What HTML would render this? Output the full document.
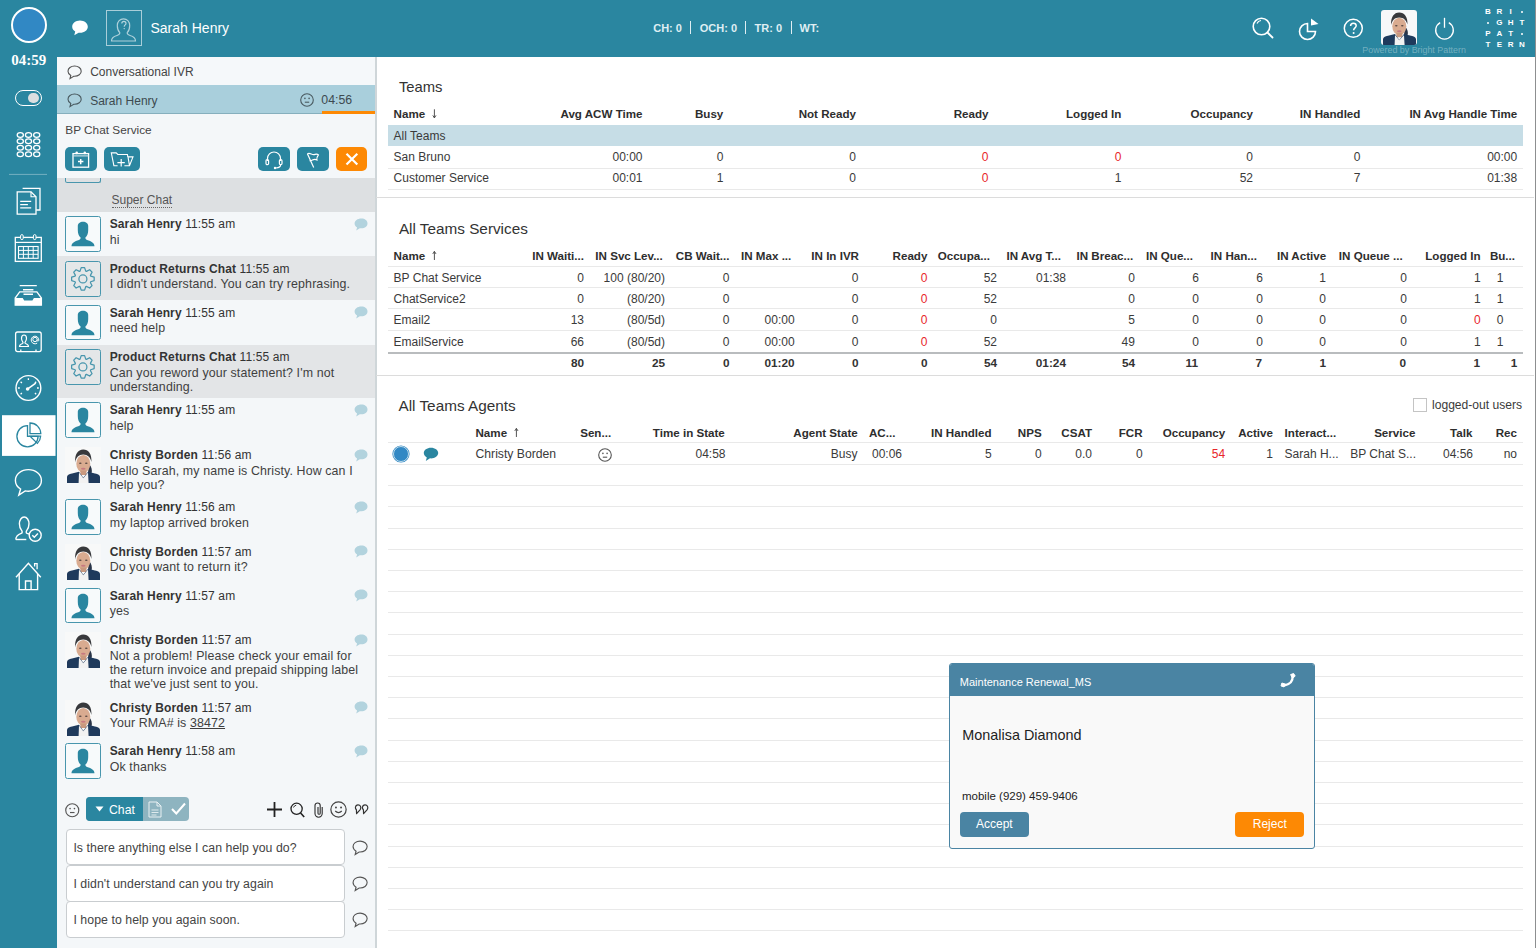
<!DOCTYPE html><html><head><meta charset="utf-8"><title>Agent Desktop</title><style>
*{box-sizing:border-box}
html,body{margin:0;padding:0}
body{width:1536px;height:948px;overflow:hidden;position:relative;background:#fff;font-family:"Liberation Sans",sans-serif;color:#333}
.t{position:absolute;white-space:nowrap}
.b{position:absolute}
svg{position:absolute;overflow:visible}
</style></head><body>
<div class="b" style="left:0px;top:0px;width:1536px;height:57px;background:#2a86a0"></div>
<div class="b" style="left:0px;top:0px;width:57px;height:948px;background:#2a86a0"></div>
<div class="b" style="left:57px;top:57px;width:318px;height:891px;background:#f4f7f9"></div>
<div class="b" style="left:375px;top:57px;width:1.5px;height:891px;background:#cfd6d9"></div>
<div class="b" style="left:11px;top:7px;width:36px;height:36px;border-radius:50%;background:#3188c4;border:2px solid #fff"></div>
<div class="t" style="left:11.30px;top:50.90px;font-size:15px;line-height:18px;font-weight:bold;color:#fff;font-family:'Liberation Serif',serif;letter-spacing:0px">04:59</div>
<div class="b" style="left:15px;top:90px;width:27px;height:16px;border-radius:8px;border:1.7px solid #fff"></div>
<div class="b" style="left:28.2px;top:92.6px;width:10.6px;height:10.6px;border-radius:50%;background:#dcdfe0"></div>
<svg style="left:71px;top:19px" width="18" height="18" viewBox="0 0 18 18"><path d="M9 1.5C4.6 1.5 1.2 4.3 1.2 7.7c0 2 1.2 3.7 3 4.8L3.3 16.3l4.3-2.6c.5.1 .9.1 1.4.1 4.4 0 7.8-2.8 7.8-6.1S13.4 1.5 9 1.5z" fill="#fff"/></svg>
<div class="b" style="left:106px;top:10px;width:36px;height:36px;border:1.5px solid rgba(255,255,255,0.6)"></div>
<svg style="left:106px;top:10px" width="36" height="36" viewBox="0 0 36 36"><path d="M5.5 31c0-3 2-4.5 5.5-5.5 2-.6 3-1.3 2.8-2.8-1.8-1.8-2.5-4.2-2.5-7.2 0-4 2.8-6.7 6.2-6.7s6.2 2.7 6.2 6.7c0 3-.7 5.4-2.5 7.2-.2 1.5.8 2.2 2.8 2.8 3.5 1 5.5 2.5 5.5 5.5z" fill="none" stroke="rgba(255,255,255,0.62)" stroke-width="1.2"/><path d="M15.8 13.6c0-1.4.9-2.3 2.1-2.3s2.1.9 2.1 2.1c0 1.5-1.8 1.6-1.8 3.3" fill="none" stroke="rgba(255,255,255,0.65)" stroke-width="1.15"/><circle cx="18.2" cy="18.6" r="0.7" fill="rgba(255,255,255,0.7)"/></svg>
<div class="t" style="left:150.50px;top:18.95px;font-size:14px;line-height:18px;font-weight:normal;color:#fff;">Sarah Henry</div>
<div class="t" style="left:653.20px;top:20.99px;font-size:11px;line-height:14px;font-weight:bold;color:#dfeef3;">CH: 0</div>
<div class="t" style="left:699.80px;top:20.99px;font-size:11px;line-height:14px;font-weight:bold;color:#dfeef3;">OCH: 0</div>
<div class="t" style="left:754.50px;top:20.99px;font-size:11px;line-height:14px;font-weight:bold;color:#dfeef3;">TR: 0</div>
<div class="t" style="left:799.60px;top:20.99px;font-size:11px;line-height:14px;font-weight:bold;color:#dfeef3;">WT:</div>
<div class="b" style="left:690.2px;top:21px;width:1px;height:13px;background:#dfeef3"></div>
<div class="b" style="left:745.4px;top:21px;width:1px;height:13px;background:#dfeef3"></div>
<div class="b" style="left:790.5px;top:21px;width:1px;height:13px;background:#dfeef3"></div>
<svg style="left:1252px;top:17px" width="22" height="22" viewBox="0 0 22 22"><circle cx="9.5" cy="9.5" r="8.3" fill="none" stroke="#fff" stroke-width="1.6"/><path d="M15.5 15.5l5 5" stroke="#fff" stroke-width="1.8" stroke-linecap="round"/><path d="M5 6.5a5 5 0 0 1 4-3" fill="none" stroke="#fff" stroke-width="1.2"/></svg>
<svg style="left:1297px;top:17px" width="24" height="23" viewBox="0 0 24 23"><path d="M10.5 6.5a8 8 0 1 0 8 8h-8z" fill="none" stroke="#fff" stroke-width="1.6"/><path d="M14 1.5l7.5 5.5-7.5 1.5z" fill="#fff"/></svg>
<svg style="left:1343px;top:18px" width="21" height="21" viewBox="0 0 21 21"><circle cx="10.3" cy="10.3" r="9" fill="none" stroke="#fff" stroke-width="1.5"/><path d="M7.6 8c0-1.7 1.2-2.8 2.8-2.8s2.8 1.1 2.8 2.6c0 2-2.6 2.2-2.6 4.4" fill="none" stroke="#fff" stroke-width="1.5"/><circle cx="10.6" cy="15" r="1" fill="#fff"/></svg>
<svg style="left:1434px;top:17px" width="21" height="23" viewBox="0 0 21 23"><path d="M6.2 5.6a8.8 8.8 0 1 0 8.6 0" fill="none" stroke="#fff" stroke-width="1.3"/><path d="M10.5 .8v10" stroke="#fff" stroke-width="1.3"/></svg>
<div class="b" style="left:1381px;top:10px;width:36px;height:35px;border-radius:3px;overflow:hidden"><svg style="left:0px;top:0px" width="36" height="35" viewBox="0 0 36 36" preserveAspectRatio="none"><rect width="36" height="36" fill="#f7f8f9"/><path d="M24 17c2.5 2.5 3.5 6 2.5 9.5l-3.5-1z" fill="#2a3548"/><ellipse cx="18.3" cy="16.8" rx="7" ry="8.8" fill="#d9ab90"/><path d="M10.2 15.5C9.5 7.5 13 2.6 18.2 2.6s8.8 4.6 8.2 12.4c-1-4.6-3.8-7.4-8.2-7.4s-7.2 2.8-8 7.9z" fill="#38393c"/><ellipse cx="15.3" cy="16.2" rx="1.3" ry="0.7" fill="#5b4a44"/><ellipse cx="21.3" cy="16.2" rx="1.3" ry="0.7" fill="#5b4a44"/><ellipse cx="18.3" cy="21.8" rx="2.3" ry="1" fill="#c77a80"/><rect x="15.4" y="23.5" width="6" height="4.5" fill="#c9997f"/><path d="M2 36v-6c0-2 2-3 5-3.6l7-1.6 4.3 6 4.7-6 7 1.6c3 .6 5 1.6 5 3.6v6z" fill="#1f3a5c"/><path d="M14 25.6l4.3 5.6 4.7-5.6.6 10.4h-10z" fill="#f2f2f2"/></svg></div>
<div class="t" style="left:1362.30px;top:45.22px;font-size:8.9px;line-height:10px;font-weight:normal;color:rgba(255,255,255,0.35);">Powered by Bright Pattern</div>
<div class="t" style="left:1482.0px;top:6.0px;width:12px;text-align:center;font-size:8px;line-height:12px;font-weight:bold;color:#fff">B</div>
<div class="t" style="left:1493.3px;top:6.0px;width:12px;text-align:center;font-size:8px;line-height:12px;font-weight:bold;color:#fff">R</div>
<div class="t" style="left:1504.6px;top:6.0px;width:12px;text-align:center;font-size:8px;line-height:12px;font-weight:bold;color:#fff">I</div>
<div class="b" style="left:1520.8px;top:10.9px;width:2.2px;height:2.2px;background:#fff;border-radius:50%"></div>
<div class="b" style="left:1486.9px;top:22.0px;width:2.2px;height:2.2px;background:#fff;border-radius:50%"></div>
<div class="t" style="left:1493.3px;top:17.1px;width:12px;text-align:center;font-size:8px;line-height:12px;font-weight:bold;color:#fff">G</div>
<div class="t" style="left:1504.6px;top:17.1px;width:12px;text-align:center;font-size:8px;line-height:12px;font-weight:bold;color:#fff">H</div>
<div class="t" style="left:1515.9px;top:17.1px;width:12px;text-align:center;font-size:8px;line-height:12px;font-weight:bold;color:#fff">T</div>
<div class="t" style="left:1482.0px;top:28.2px;width:12px;text-align:center;font-size:8px;line-height:12px;font-weight:bold;color:#fff">P</div>
<div class="t" style="left:1493.3px;top:28.2px;width:12px;text-align:center;font-size:8px;line-height:12px;font-weight:bold;color:#fff">A</div>
<div class="t" style="left:1504.6px;top:28.2px;width:12px;text-align:center;font-size:8px;line-height:12px;font-weight:bold;color:#fff">T</div>
<div class="b" style="left:1520.8px;top:33.1px;width:2.2px;height:2.2px;background:#fff;border-radius:50%"></div>
<div class="t" style="left:1482.0px;top:39.3px;width:12px;text-align:center;font-size:8px;line-height:12px;font-weight:bold;color:#fff">T</div>
<div class="t" style="left:1493.3px;top:39.3px;width:12px;text-align:center;font-size:8px;line-height:12px;font-weight:bold;color:#fff">E</div>
<div class="t" style="left:1504.6px;top:39.3px;width:12px;text-align:center;font-size:8px;line-height:12px;font-weight:bold;color:#fff">R</div>
<div class="t" style="left:1515.9px;top:39.3px;width:12px;text-align:center;font-size:8px;line-height:12px;font-weight:bold;color:#fff">N</div>
<svg style="left:0;top:0" width="57" height="948"><ellipse cx="20.3" cy="135" rx="3.1" ry="2.4" fill="none" stroke="#fff" stroke-width="1.3"/><ellipse cx="20.3" cy="141.3" rx="3.1" ry="2.4" fill="none" stroke="#fff" stroke-width="1.3"/><ellipse cx="20.3" cy="147.7" rx="3.1" ry="2.4" fill="none" stroke="#fff" stroke-width="1.3"/><ellipse cx="20.3" cy="154.2" rx="3.1" ry="2.4" fill="none" stroke="#fff" stroke-width="1.3"/><ellipse cx="28.5" cy="135" rx="3.1" ry="2.4" fill="none" stroke="#fff" stroke-width="1.3"/><ellipse cx="28.5" cy="141.3" rx="3.1" ry="2.4" fill="none" stroke="#fff" stroke-width="1.3"/><ellipse cx="28.5" cy="147.7" rx="3.1" ry="2.4" fill="none" stroke="#fff" stroke-width="1.3"/><ellipse cx="28.5" cy="154.2" rx="3.1" ry="2.4" fill="none" stroke="#fff" stroke-width="1.3"/><ellipse cx="36.7" cy="135" rx="3.1" ry="2.4" fill="none" stroke="#fff" stroke-width="1.3"/><ellipse cx="36.7" cy="141.3" rx="3.1" ry="2.4" fill="none" stroke="#fff" stroke-width="1.3"/><ellipse cx="36.7" cy="147.7" rx="3.1" ry="2.4" fill="none" stroke="#fff" stroke-width="1.3"/><ellipse cx="36.7" cy="154.2" rx="3.1" ry="2.4" fill="none" stroke="#fff" stroke-width="1.3"/><path d="M9 174.4h38" stroke="rgba(255,255,255,0.35)" stroke-width="1"/><path d="M22.6 188.4h17.4v21.6h-3.8" fill="none" stroke="#fff" stroke-width="1.3"/><path d="M17.2 191.8h13.8l5 5v17.3h-18.8z" fill="#2a86a0" stroke="#fff" stroke-width="1.3"/><path d="M31 191.8v5h5" fill="none" stroke="#fff" stroke-width="1.1"/><path d="M20.2 201.3h11M20.2 204.7h7.7M20.2 207.8h11" stroke="#fff" stroke-width="1.2"/><rect x="15.3" y="237.4" width="26" height="24" fill="none" stroke="#fff" stroke-width="1.3"/><path d="M15.3 242.4h26" stroke="#fff" stroke-width="1.2"/><rect x="20.6" y="234.6" width="2.6" height="5" rx="1.3" fill="#2a86a0" stroke="#fff" stroke-width="1"/><rect x="33.4" y="234.6" width="2.6" height="5" rx="1.3" fill="#2a86a0" stroke="#fff" stroke-width="1"/><rect x="18.5" y="246.5" width="19.6" height="11.8" fill="none" stroke="#fff" stroke-width="1.1"/><path d="M23.4 246.5v11.8M28.3 246.5v11.8M33.2 246.5v11.8M18.5 250.4h19.6M18.5 254.3h19.6" stroke="#fff" stroke-width="1"/><path d="M19.7 285.6h17.1M23 289.7h10.4M23.5 294.3h9.5" stroke="#fff" stroke-width="1.4"/><path d="M15.2 298v7.2h26.2V298l-4.5-6.2h-17.2z" fill="none" stroke="#fff" stroke-width="1.3"/><path d="M15.2 298h7.5l1.5 2.5h8.2l1.5-2.5h7.5v7.2H15.2z" fill="#fff"/><rect x="15.6" y="332" width="25.6" height="19.6" rx="2" fill="none" stroke="#fff" stroke-width="1.3"/><path d="M20.8 351.6v-2"  stroke="#fff" stroke-width="1.3"/><path d="M36 351.6v-2" stroke="#fff" stroke-width="1.3"/><path d="M19.5 346.5c0-1.8 1.5-2.5 3-3 .7-.3.6-1 .2-1.6-.8-1-1.2-2.2-1.2-3.6 0-2 1.1-3.3 2.5-3.3s2.5 1.3 2.5 3.3c0 1.4-.4 2.6-1.2 3.6-.4.6-.5 1.3.2 1.6 1.5.5 3 1.2 3 3z" fill="none" stroke="#fff" stroke-width="1.2"/><circle cx="35" cy="339.5" r="2.2" fill="none" stroke="#fff" stroke-width="1"/><path d="M37.2 339.5v1c0 1 1.6 1 1.6-.5a3.8 3.8 0 1 0-1.6 3.1" fill="none" stroke="#fff" stroke-width="1"/><circle cx="28.4" cy="388" r="12.4" fill="none" stroke="#fff" stroke-width="1.4"/><path d="M28.4 378.2v1.8M20.6 381.8l1.3 1.2M18 388h1.8M20.6 394.2l1.3-1.2M36.2 394.2l-1.3-1.2M38.8 388H37M36.2 381.8l-1.3 1.2" stroke="#fff" stroke-width="1.3"/><path d="M27 389.4l8.8-6.2" stroke="#fff" stroke-width="1.6"/><circle cx="27.6" cy="389" r="1.8" fill="#fff"/><rect x="2" y="415.2" width="53.5" height="40.7" fill="#fff"/><path d="M27.5 425.7a10.6 10.6 0 1 0 10.6 10.6H27.5z" fill="none" stroke="#2a86a0" stroke-width="1.3"/><path d="M30 423v10.6h10.8A10.8 10.8 0 0 0 30 423z" fill="none" stroke="#2a86a0" stroke-width="1.3"/><path d="M30 436.2h10.6a10.8 10.8 0 0 1-3.2 7.2z" fill="none" stroke="#2a86a0" stroke-width="1.3"/><path d="M28.4 469.6c-7.2 0-13 4.8-13 10.8 0 3.5 2 6.6 5.2 8.6l-1.8 6.2 6.4-4.3c1 .2 2.1.3 3.2.3 7.2 0 13-4.8 13-10.8s-5.8-10.8-13-10.8z" fill="none" stroke="#fff" stroke-width="1.4"/><path d="M15.8 539.5c0-3.8 2.6-5 5.4-6.1 1.3-.5 1.2-1.9.4-3-1.4-1.8-2.2-4.1-2.2-6.6 0-3.8 2.1-6.8 4.8-6.8s4.8 3 4.8 6.8c0 2.5-.8 4.8-2.2 6.6-.8 1.1-.9 2.5.4 3 .6.2 1.2.5 1.8.8" fill="none" stroke="#fff" stroke-width="1.4"/><path d="M15.8 539.5h10.5" stroke="#fff" stroke-width="1.4"/><circle cx="35.2" cy="535.3" r="6" fill="#2a86a0" stroke="#fff" stroke-width="1.4"/><path d="M32.3 535.3l2 2 3.6-3.8" fill="none" stroke="#fff" stroke-width="1.4"/><path d="M16 577.2l12.4-14 12.4 14" fill="none" stroke="#fff" stroke-width="1.4"/><path d="M19.2 574v15.6h18.4V574" fill="none" stroke="#fff" stroke-width="1.4"/><path d="M25.5 589.6v-8.6h5.6v8.6" fill="none" stroke="#fff" stroke-width="1.4"/><path d="M34.6 566.5v-2.8h2.5v5.6" fill="none" stroke="#fff" stroke-width="1.3"/></svg>
<div class="b" style="left:57px;top:57px;width:318px;height:28px;background:#f5f8fa"></div>
<svg style="left:66.5px;top:64.8px" width="15" height="15" viewBox="0 0 15 15"><path d="M7.6 1C3.9 1 1 3.3 1 6.2c0 1.8 1.1 3.3 2.8 4.3L3 13.6l3.7-2.4c.3 0 .6.1.9.1 3.7 0 6.6-2.3 6.6-5.1S11.3 1 7.6 1z" fill="none" stroke="#555" stroke-width="1.1"/></svg>
<div class="t" style="left:90.20px;top:64.34px;font-size:12px;line-height:16px;font-weight:normal;color:#444;">Conversational IVR</div>
<div class="b" style="left:57px;top:85px;width:318px;height:29.2px;background:#a9cfdc;border-bottom:1px solid #86afbd"></div>
<svg style="left:66.5px;top:92.8px" width="15" height="15" viewBox="0 0 15 15"><path d="M7.6 1C3.9 1 1 3.3 1 6.2c0 1.8 1.1 3.3 2.8 4.3L3 13.6l3.7-2.4c.3 0 .6.1.9.1 3.7 0 6.6-2.3 6.6-5.1S11.3 1 7.6 1z" fill="none" stroke="#4a5a60" stroke-width="1.1"/></svg>
<div class="t" style="left:90.20px;top:92.54px;font-size:12px;line-height:16px;font-weight:normal;color:#3d4a50;">Sarah Henry</div>
<svg style="left:300px;top:93.3px" width="14" height="14" viewBox="0 0 14 14"><circle cx="7" cy="7" r="6.3" fill="none" stroke="#4a5a60" stroke-width="1.1"/><circle cx="4.9" cy="5.4" r="0.8" fill="#4a5a60"/><circle cx="9.1" cy="5.4" r="0.8" fill="#4a5a60"/><path d="M4.8 9.2h4.4" stroke="#4a5a60" stroke-width="1.1"/></svg>
<div class="t" style="left:321.30px;top:91.54px;font-size:12.3px;line-height:16px;font-weight:normal;color:#3d4a50;">04:56</div>
<div class="b" style="left:321.7px;top:110.8px;width:53px;height:3.2px;background:#fd8904"></div>
<div class="t" style="left:65.30px;top:121.51px;font-size:11.8px;line-height:16px;font-weight:normal;color:#444;">BP Chat Service</div>
<div class="b" style="left:65.3px;top:146.5px;width:32px;height:24.8px;background:#2a86a0;border-radius:5px"></div><svg style="left:65.3px;top:146.5px" width="32" height="24.8" viewBox="0 0 32 24.8"><rect x="8" y="6.6" width="15.6" height="13.6" fill="none" stroke="#fff" stroke-width="1.3"/><path d="M8 8.9h15.6" stroke="#cfe3ea" stroke-width="1.1"/><circle cx="11.7" cy="5.9" r="1.3" fill="#fff"/><circle cx="19.8" cy="5.9" r="1.3" fill="#fff"/><path d="M15.7 11.9v5.4M13 14.6h5.4" stroke="#fff" stroke-width="1.5"/></svg>
<div class="b" style="left:104.3px;top:146.5px;width:35.4px;height:24.8px;background:#2a86a0;border-radius:5px"></div><svg style="left:104.3px;top:146.5px" width="35.4" height="24.8" viewBox="0 0 35.4 24.8"><path d="M13.6 18.7H9.9L7.3 5.9h4.9l1.6 1.6h9.6l.5 2.4" fill="none" stroke="#fff" stroke-width="1.1"/><path d="M20.4 18.7h5.1L29 9.9h-5L25.5 18.7" fill="none" stroke="#fff" stroke-width="1.1"/><path d="M17.2 12v7.4M13.4 15.7h7.4" stroke="#fff" stroke-width="1.2"/></svg>
<div class="b" style="left:258px;top:146.5px;width:32px;height:24.8px;background:#2a86a0;border-radius:5px"></div><svg style="left:258px;top:146.5px" width="32" height="24.8" viewBox="0 0 32 24.8"><path d="M9.5 14v-2.5a6.5 6.5 0 0 1 13 0V14" fill="none" stroke="#fff" stroke-width="1.2"/><rect x="8" y="12.6" width="2.6" height="5" rx="1.2" fill="none" stroke="#fff" stroke-width="1.2"/><rect x="21.4" y="12.6" width="2.6" height="5" rx="1.2" fill="none" stroke="#fff" stroke-width="1.2"/><path d="M22.7 17.6c0 2.2-2 3.4-4.8 3.4" fill="none" stroke="#fff" stroke-width="1.2"/><circle cx="17" cy="21" r="1.2" fill="#fff"/></svg>
<div class="b" style="left:296.9px;top:146.5px;width:32px;height:24.8px;background:#2a86a0;border-radius:5px"></div><svg style="left:296.9px;top:146.5px" width="32" height="24.8" viewBox="0 0 32 24.8"><path d="M10.4 6.8l6.3 13.6" fill="none" stroke="#fff" stroke-width="1.2"/><path d="M10.4 6.8c3-1.5 4.5 1.8 7.5.6 1.5-.6 2.8-.3 3.5.5-1.2 1.6-1.8 3.3-1.5 5-1.5-.8-3-.7-4.5.2-1 .6-2 .8-2.8.5" fill="none" stroke="#fff" stroke-width="1.2"/></svg>
<div class="b" style="left:335.7px;top:146.5px;width:31.8px;height:24.8px;background:#fd8904;border-radius:5px"></div><svg style="left:335.7px;top:146.5px" width="31.8" height="24.8" viewBox="0 0 31.8 24.8"><path d="M10.5 6.7l10.8 10.8M21.3 6.7L10.5 17.5" stroke="#fff" stroke-width="2.2"/></svg>
<div class="b" style="left:57px;top:177.8px;width:318px;height:34px;background:#dde0e2"></div>
<div class="b" style="left:65.3px;top:177.8px;width:35.6px;height:5.6px;border:1.7px solid #4896ad;border-top:none;border-radius:0 0 2.5px 2.5px"></div>
<div class="t" style="left:111.50px;top:192.84px;font-size:12px;line-height:14px;font-weight:normal;color:#555;border-bottom:1px dotted #666;line-height:14px">Super Chat</div>
<div class="b" style="left:65.3px;top:216.2px;width:35.6px;height:35.8px;border:1.7px solid #4896ad;border-radius:2.5px;background:#f7fafb"></div><svg style="left:65.3px;top:216.2px" width="36" height="36" viewBox="0 0 36 36"><path d="M6.5 30.3C6.5 27 9.5 25.3 14 24c1.2-.4 1.6-1 1.6-2.4-1.8-1.6-2.8-4.1-2.8-7.6V10c0-2.7 2.2-4.3 5.2-4.3s5.2 1.6 5.2 4.3v4c0 3.5-1 6-2.8 7.6 0 1.4.4 2 1.6 2.4 4.5 1.3 7.5 3 7.5 6.3z" fill="#2a86a0"/></svg>
<svg style="left:354.3px;top:217.79999999999998px" width="14" height="13" viewBox="0 0 14 13"><path d="M7.3 .6C3.6.6.6 2.8.6 5.5c0 1.6.9 3 2.5 3.9L2.2 12.6l3.6-2.4c.5.1 1 .1 1.5.1 3.7 0 6.2-2.2 6.2-4.9S11 .6 7.3.6z" fill="#b2d3de"/></svg>
<div class="t" style="left:109.70px;top:216.24px;font-size:12px;line-height:16px;font-weight:normal;color:#333;letter-spacing:0.12px"><b>Sarah Henry</b> 11:55 am</div>
<div class="t" style="left:109.70px;top:231.70px;font-size:12.4px;line-height:16px;font-weight:normal;color:#3f3f3f;letter-spacing:0.12px">hi</div>
<div class="b" style="left:57px;top:256.3px;width:318px;height:44px;background:#e3e5e7"></div>
<div class="b" style="left:65.3px;top:260.8px;width:35.6px;height:35.8px;border:1.7px solid #4896ad;border-radius:2.5px;background:#e4e7e8"></div><svg style="left:65.3px;top:260.8px" width="36" height="36" viewBox="0 0 36 36"><path d="M15.06 10.10 L16.21 6.63 L19.59 6.63 L20.74 10.10 L21.41 10.38 L24.68 8.74 L27.06 11.12 L25.42 14.39 L25.70 15.06 L29.17 16.21 L29.17 19.59 L25.70 20.74 L25.42 21.41 L27.06 24.68 L24.68 27.06 L21.41 25.42 L20.74 25.70 L19.59 29.17 L16.21 29.17 L15.06 25.70 L14.39 25.42 L11.12 27.06 L8.74 24.68 L10.38 21.41 L10.10 20.74 L6.63 19.59 L6.63 16.21 L10.10 15.06 L10.38 14.39 L8.74 11.12 L11.12 8.74 L14.39 10.38Z" fill="none" stroke="#4896ad" stroke-width="1.25" stroke-linejoin="round"/><circle cx="17.9" cy="17.9" r="4" fill="none" stroke="#4896ad" stroke-width="1.25"/></svg>
<div class="t" style="left:109.70px;top:260.84px;font-size:12px;line-height:16px;font-weight:normal;color:#333;letter-spacing:0.12px"><b>Product Returns Chat</b> 11:55 am</div>
<div class="t" style="left:109.70px;top:276.30px;font-size:12.4px;line-height:16px;font-weight:normal;color:#3f3f3f;letter-spacing:0.12px">I didn't understand. You can try rephrasing.</div>
<div class="b" style="left:65.3px;top:304.6px;width:35.6px;height:35.8px;border:1.7px solid #4896ad;border-radius:2.5px;background:#f7fafb"></div><svg style="left:65.3px;top:304.6px" width="36" height="36" viewBox="0 0 36 36"><path d="M6.5 30.3C6.5 27 9.5 25.3 14 24c1.2-.4 1.6-1 1.6-2.4-1.8-1.6-2.8-4.1-2.8-7.6V10c0-2.7 2.2-4.3 5.2-4.3s5.2 1.6 5.2 4.3v4c0 3.5-1 6-2.8 7.6 0 1.4.4 2 1.6 2.4 4.5 1.3 7.5 3 7.5 6.3z" fill="#2a86a0"/></svg>
<svg style="left:354.3px;top:306.20000000000005px" width="14" height="13" viewBox="0 0 14 13"><path d="M7.3 .6C3.6.6.6 2.8.6 5.5c0 1.6.9 3 2.5 3.9L2.2 12.6l3.6-2.4c.5.1 1 .1 1.5.1 3.7 0 6.2-2.2 6.2-4.9S11 .6 7.3.6z" fill="#b2d3de"/></svg>
<div class="t" style="left:109.70px;top:304.64px;font-size:12px;line-height:16px;font-weight:normal;color:#333;letter-spacing:0.12px"><b>Sarah Henry</b> 11:55 am</div>
<div class="t" style="left:109.70px;top:320.10px;font-size:12.4px;line-height:16px;font-weight:normal;color:#3f3f3f;letter-spacing:0.12px">need help</div>
<div class="b" style="left:57px;top:344.7px;width:318px;height:53px;background:#e3e5e7"></div>
<div class="b" style="left:65.3px;top:349.2px;width:35.6px;height:35.8px;border:1.7px solid #4896ad;border-radius:2.5px;background:#e4e7e8"></div><svg style="left:65.3px;top:349.2px" width="36" height="36" viewBox="0 0 36 36"><path d="M15.06 10.10 L16.21 6.63 L19.59 6.63 L20.74 10.10 L21.41 10.38 L24.68 8.74 L27.06 11.12 L25.42 14.39 L25.70 15.06 L29.17 16.21 L29.17 19.59 L25.70 20.74 L25.42 21.41 L27.06 24.68 L24.68 27.06 L21.41 25.42 L20.74 25.70 L19.59 29.17 L16.21 29.17 L15.06 25.70 L14.39 25.42 L11.12 27.06 L8.74 24.68 L10.38 21.41 L10.10 20.74 L6.63 19.59 L6.63 16.21 L10.10 15.06 L10.38 14.39 L8.74 11.12 L11.12 8.74 L14.39 10.38Z" fill="none" stroke="#4896ad" stroke-width="1.25" stroke-linejoin="round"/><circle cx="17.9" cy="17.9" r="4" fill="none" stroke="#4896ad" stroke-width="1.25"/></svg>
<div class="t" style="left:109.70px;top:349.24px;font-size:12px;line-height:16px;font-weight:normal;color:#333;letter-spacing:0.12px"><b>Product Returns Chat</b> 11:55 am</div>
<div class="t" style="left:109.70px;top:364.70px;font-size:12.4px;line-height:16px;font-weight:normal;color:#3f3f3f;letter-spacing:0.12px">Can you reword your statement? I'm not</div>
<div class="t" style="left:109.70px;top:378.90px;font-size:12.4px;line-height:16px;font-weight:normal;color:#3f3f3f;letter-spacing:0.12px">understanding.</div>
<div class="b" style="left:65.3px;top:402px;width:35.6px;height:35.8px;border:1.7px solid #4896ad;border-radius:2.5px;background:#f7fafb"></div><svg style="left:65.3px;top:402px" width="36" height="36" viewBox="0 0 36 36"><path d="M6.5 30.3C6.5 27 9.5 25.3 14 24c1.2-.4 1.6-1 1.6-2.4-1.8-1.6-2.8-4.1-2.8-7.6V10c0-2.7 2.2-4.3 5.2-4.3s5.2 1.6 5.2 4.3v4c0 3.5-1 6-2.8 7.6 0 1.4.4 2 1.6 2.4 4.5 1.3 7.5 3 7.5 6.3z" fill="#2a86a0"/></svg>
<svg style="left:354.3px;top:403.6px" width="14" height="13" viewBox="0 0 14 13"><path d="M7.3 .6C3.6.6.6 2.8.6 5.5c0 1.6.9 3 2.5 3.9L2.2 12.6l3.6-2.4c.5.1 1 .1 1.5.1 3.7 0 6.2-2.2 6.2-4.9S11 .6 7.3.6z" fill="#b2d3de"/></svg>
<div class="t" style="left:109.70px;top:402.04px;font-size:12px;line-height:16px;font-weight:normal;color:#333;letter-spacing:0.12px"><b>Sarah Henry</b> 11:55 am</div>
<div class="t" style="left:109.70px;top:417.50px;font-size:12.4px;line-height:16px;font-weight:normal;color:#3f3f3f;letter-spacing:0.12px">help</div>
<svg style="left:65.3px;top:447px" width="36" height="36" viewBox="0 0 36 36" preserveAspectRatio="none"><rect width="36" height="36" fill="#f8f9f9"/><path d="M24 17c2.5 2.5 3.5 6 2.5 9.5l-3.5-1z" fill="#2a3548"/><ellipse cx="18.3" cy="16.8" rx="7" ry="8.8" fill="#d9ab90"/><path d="M10.2 15.5C9.5 7.5 13 2.6 18.2 2.6s8.8 4.6 8.2 12.4c-1-4.6-3.8-7.4-8.2-7.4s-7.2 2.8-8 7.9z" fill="#38393c"/><ellipse cx="15.3" cy="16.2" rx="1.3" ry="0.7" fill="#5b4a44"/><ellipse cx="21.3" cy="16.2" rx="1.3" ry="0.7" fill="#5b4a44"/><ellipse cx="18.3" cy="21.8" rx="2.3" ry="1" fill="#c77a80"/><rect x="15.4" y="23.5" width="6" height="4.5" fill="#c9997f"/><path d="M2 36v-6c0-2 2-3 5-3.6l7-1.6 4.3 6 4.7-6 7 1.6c3 .6 5 1.6 5 3.6v6z" fill="#1f3a5c"/><path d="M14 25.6l4.3 5.6 4.7-5.6.6 10.4h-10z" fill="#f2f2f2"/></svg>
<svg style="left:354.3px;top:448.6px" width="14" height="13" viewBox="0 0 14 13"><path d="M7.3 .6C3.6.6.6 2.8.6 5.5c0 1.6.9 3 2.5 3.9L2.2 12.6l3.6-2.4c.5.1 1 .1 1.5.1 3.7 0 6.2-2.2 6.2-4.9S11 .6 7.3.6z" fill="#b2d3de"/></svg>
<div class="t" style="left:109.70px;top:447.04px;font-size:12px;line-height:16px;font-weight:normal;color:#333;letter-spacing:0.12px"><b>Christy Borden</b> 11:56 am</div>
<div class="t" style="left:109.70px;top:462.50px;font-size:12.4px;line-height:16px;font-weight:normal;color:#3f3f3f;letter-spacing:0.12px">Hello Sarah, my name is Christy. How can I</div>
<div class="t" style="left:109.70px;top:476.70px;font-size:12.4px;line-height:16px;font-weight:normal;color:#3f3f3f;letter-spacing:0.12px">help you?</div>
<div class="b" style="left:65.3px;top:499.2px;width:35.6px;height:35.8px;border:1.7px solid #4896ad;border-radius:2.5px;background:#f7fafb"></div><svg style="left:65.3px;top:499.2px" width="36" height="36" viewBox="0 0 36 36"><path d="M6.5 30.3C6.5 27 9.5 25.3 14 24c1.2-.4 1.6-1 1.6-2.4-1.8-1.6-2.8-4.1-2.8-7.6V10c0-2.7 2.2-4.3 5.2-4.3s5.2 1.6 5.2 4.3v4c0 3.5-1 6-2.8 7.6 0 1.4.4 2 1.6 2.4 4.5 1.3 7.5 3 7.5 6.3z" fill="#2a86a0"/></svg>
<svg style="left:354.3px;top:500.8px" width="14" height="13" viewBox="0 0 14 13"><path d="M7.3 .6C3.6.6.6 2.8.6 5.5c0 1.6.9 3 2.5 3.9L2.2 12.6l3.6-2.4c.5.1 1 .1 1.5.1 3.7 0 6.2-2.2 6.2-4.9S11 .6 7.3.6z" fill="#b2d3de"/></svg>
<div class="t" style="left:109.70px;top:499.24px;font-size:12px;line-height:16px;font-weight:normal;color:#333;letter-spacing:0.12px"><b>Sarah Henry</b> 11:56 am</div>
<div class="t" style="left:109.70px;top:514.70px;font-size:12.4px;line-height:16px;font-weight:normal;color:#3f3f3f;letter-spacing:0.12px">my laptop arrived broken</div>
<svg style="left:65.3px;top:543.6px" width="36" height="36" viewBox="0 0 36 36" preserveAspectRatio="none"><rect width="36" height="36" fill="#f8f9f9"/><path d="M24 17c2.5 2.5 3.5 6 2.5 9.5l-3.5-1z" fill="#2a3548"/><ellipse cx="18.3" cy="16.8" rx="7" ry="8.8" fill="#d9ab90"/><path d="M10.2 15.5C9.5 7.5 13 2.6 18.2 2.6s8.8 4.6 8.2 12.4c-1-4.6-3.8-7.4-8.2-7.4s-7.2 2.8-8 7.9z" fill="#38393c"/><ellipse cx="15.3" cy="16.2" rx="1.3" ry="0.7" fill="#5b4a44"/><ellipse cx="21.3" cy="16.2" rx="1.3" ry="0.7" fill="#5b4a44"/><ellipse cx="18.3" cy="21.8" rx="2.3" ry="1" fill="#c77a80"/><rect x="15.4" y="23.5" width="6" height="4.5" fill="#c9997f"/><path d="M2 36v-6c0-2 2-3 5-3.6l7-1.6 4.3 6 4.7-6 7 1.6c3 .6 5 1.6 5 3.6v6z" fill="#1f3a5c"/><path d="M14 25.6l4.3 5.6 4.7-5.6.6 10.4h-10z" fill="#f2f2f2"/></svg>
<svg style="left:354.3px;top:545.2px" width="14" height="13" viewBox="0 0 14 13"><path d="M7.3 .6C3.6.6.6 2.8.6 5.5c0 1.6.9 3 2.5 3.9L2.2 12.6l3.6-2.4c.5.1 1 .1 1.5.1 3.7 0 6.2-2.2 6.2-4.9S11 .6 7.3.6z" fill="#b2d3de"/></svg>
<div class="t" style="left:109.70px;top:543.64px;font-size:12px;line-height:16px;font-weight:normal;color:#333;letter-spacing:0.12px"><b>Christy Borden</b> 11:57 am</div>
<div class="t" style="left:109.70px;top:559.10px;font-size:12.4px;line-height:16px;font-weight:normal;color:#3f3f3f;letter-spacing:0.12px">Do you want to return it?</div>
<div class="b" style="left:65.3px;top:587.5px;width:35.6px;height:35.8px;border:1.7px solid #4896ad;border-radius:2.5px;background:#f7fafb"></div><svg style="left:65.3px;top:587.5px" width="36" height="36" viewBox="0 0 36 36"><path d="M6.5 30.3C6.5 27 9.5 25.3 14 24c1.2-.4 1.6-1 1.6-2.4-1.8-1.6-2.8-4.1-2.8-7.6V10c0-2.7 2.2-4.3 5.2-4.3s5.2 1.6 5.2 4.3v4c0 3.5-1 6-2.8 7.6 0 1.4.4 2 1.6 2.4 4.5 1.3 7.5 3 7.5 6.3z" fill="#2a86a0"/></svg>
<svg style="left:354.3px;top:589.1px" width="14" height="13" viewBox="0 0 14 13"><path d="M7.3 .6C3.6.6.6 2.8.6 5.5c0 1.6.9 3 2.5 3.9L2.2 12.6l3.6-2.4c.5.1 1 .1 1.5.1 3.7 0 6.2-2.2 6.2-4.9S11 .6 7.3.6z" fill="#b2d3de"/></svg>
<div class="t" style="left:109.70px;top:587.54px;font-size:12px;line-height:16px;font-weight:normal;color:#333;letter-spacing:0.12px"><b>Sarah Henry</b> 11:57 am</div>
<div class="t" style="left:109.70px;top:603.00px;font-size:12.4px;line-height:16px;font-weight:normal;color:#3f3f3f;letter-spacing:0.12px">yes</div>
<svg style="left:65.3px;top:632.3px" width="36" height="36" viewBox="0 0 36 36" preserveAspectRatio="none"><rect width="36" height="36" fill="#f8f9f9"/><path d="M24 17c2.5 2.5 3.5 6 2.5 9.5l-3.5-1z" fill="#2a3548"/><ellipse cx="18.3" cy="16.8" rx="7" ry="8.8" fill="#d9ab90"/><path d="M10.2 15.5C9.5 7.5 13 2.6 18.2 2.6s8.8 4.6 8.2 12.4c-1-4.6-3.8-7.4-8.2-7.4s-7.2 2.8-8 7.9z" fill="#38393c"/><ellipse cx="15.3" cy="16.2" rx="1.3" ry="0.7" fill="#5b4a44"/><ellipse cx="21.3" cy="16.2" rx="1.3" ry="0.7" fill="#5b4a44"/><ellipse cx="18.3" cy="21.8" rx="2.3" ry="1" fill="#c77a80"/><rect x="15.4" y="23.5" width="6" height="4.5" fill="#c9997f"/><path d="M2 36v-6c0-2 2-3 5-3.6l7-1.6 4.3 6 4.7-6 7 1.6c3 .6 5 1.6 5 3.6v6z" fill="#1f3a5c"/><path d="M14 25.6l4.3 5.6 4.7-5.6.6 10.4h-10z" fill="#f2f2f2"/></svg>
<svg style="left:354.3px;top:633.9px" width="14" height="13" viewBox="0 0 14 13"><path d="M7.3 .6C3.6.6.6 2.8.6 5.5c0 1.6.9 3 2.5 3.9L2.2 12.6l3.6-2.4c.5.1 1 .1 1.5.1 3.7 0 6.2-2.2 6.2-4.9S11 .6 7.3.6z" fill="#b2d3de"/></svg>
<div class="t" style="left:109.70px;top:632.34px;font-size:12px;line-height:16px;font-weight:normal;color:#333;letter-spacing:0.12px"><b>Christy Borden</b> 11:57 am</div>
<div class="t" style="left:109.70px;top:647.80px;font-size:12.4px;line-height:16px;font-weight:normal;color:#3f3f3f;letter-spacing:0.12px">Not a problem! Please check your email for</div>
<div class="t" style="left:109.70px;top:662.00px;font-size:12.4px;line-height:16px;font-weight:normal;color:#3f3f3f;letter-spacing:0.12px">the return invoice and prepaid shipping label</div>
<div class="t" style="left:109.70px;top:676.20px;font-size:12.4px;line-height:16px;font-weight:normal;color:#3f3f3f;letter-spacing:0.12px">that we've just sent to you.</div>
<svg style="left:65.3px;top:699.5px" width="36" height="36" viewBox="0 0 36 36" preserveAspectRatio="none"><rect width="36" height="36" fill="#f8f9f9"/><path d="M24 17c2.5 2.5 3.5 6 2.5 9.5l-3.5-1z" fill="#2a3548"/><ellipse cx="18.3" cy="16.8" rx="7" ry="8.8" fill="#d9ab90"/><path d="M10.2 15.5C9.5 7.5 13 2.6 18.2 2.6s8.8 4.6 8.2 12.4c-1-4.6-3.8-7.4-8.2-7.4s-7.2 2.8-8 7.9z" fill="#38393c"/><ellipse cx="15.3" cy="16.2" rx="1.3" ry="0.7" fill="#5b4a44"/><ellipse cx="21.3" cy="16.2" rx="1.3" ry="0.7" fill="#5b4a44"/><ellipse cx="18.3" cy="21.8" rx="2.3" ry="1" fill="#c77a80"/><rect x="15.4" y="23.5" width="6" height="4.5" fill="#c9997f"/><path d="M2 36v-6c0-2 2-3 5-3.6l7-1.6 4.3 6 4.7-6 7 1.6c3 .6 5 1.6 5 3.6v6z" fill="#1f3a5c"/><path d="M14 25.6l4.3 5.6 4.7-5.6.6 10.4h-10z" fill="#f2f2f2"/></svg>
<svg style="left:354.3px;top:701.1px" width="14" height="13" viewBox="0 0 14 13"><path d="M7.3 .6C3.6.6.6 2.8.6 5.5c0 1.6.9 3 2.5 3.9L2.2 12.6l3.6-2.4c.5.1 1 .1 1.5.1 3.7 0 6.2-2.2 6.2-4.9S11 .6 7.3.6z" fill="#b2d3de"/></svg>
<div class="t" style="left:109.70px;top:699.54px;font-size:12px;line-height:16px;font-weight:normal;color:#333;letter-spacing:0.12px"><b>Christy Borden</b> 11:57 am</div>
<div class="t" style="left:109.70px;top:715.00px;font-size:12.4px;line-height:16px;font-weight:normal;color:#3f3f3f;letter-spacing:0.12px">Your RMA# is <span style="text-decoration:underline">38472</span></div>
<div class="b" style="left:65.3px;top:743px;width:35.6px;height:35.8px;border:1.7px solid #4896ad;border-radius:2.5px;background:#f7fafb"></div><svg style="left:65.3px;top:743px" width="36" height="36" viewBox="0 0 36 36"><path d="M6.5 30.3C6.5 27 9.5 25.3 14 24c1.2-.4 1.6-1 1.6-2.4-1.8-1.6-2.8-4.1-2.8-7.6V10c0-2.7 2.2-4.3 5.2-4.3s5.2 1.6 5.2 4.3v4c0 3.5-1 6-2.8 7.6 0 1.4.4 2 1.6 2.4 4.5 1.3 7.5 3 7.5 6.3z" fill="#2a86a0"/></svg>
<svg style="left:354.3px;top:744.6px" width="14" height="13" viewBox="0 0 14 13"><path d="M7.3 .6C3.6.6.6 2.8.6 5.5c0 1.6.9 3 2.5 3.9L2.2 12.6l3.6-2.4c.5.1 1 .1 1.5.1 3.7 0 6.2-2.2 6.2-4.9S11 .6 7.3.6z" fill="#b2d3de"/></svg>
<div class="t" style="left:109.70px;top:743.04px;font-size:12px;line-height:16px;font-weight:normal;color:#333;letter-spacing:0.12px"><b>Sarah Henry</b> 11:58 am</div>
<div class="t" style="left:109.70px;top:758.50px;font-size:12.4px;line-height:16px;font-weight:normal;color:#3f3f3f;letter-spacing:0.12px">Ok thanks</div>
<svg style="left:64.8px;top:802.8px" width="14.5" height="14.5" viewBox="0 0 14 14"><circle cx="7" cy="7" r="6.3" fill="none" stroke="#555" stroke-width="1.1"/><circle cx="4.9" cy="5.4" r="0.8" fill="#555"/><circle cx="9.1" cy="5.4" r="0.8" fill="#555"/><path d="M4.8 9.2h4.4" stroke="#555" stroke-width="1.1"/></svg>
<div class="b" style="left:85.9px;top:797.2px;width:103px;height:24px;border-radius:4px;background:#8eb4c0;overflow:hidden"><div style="position:absolute;left:0;top:0;width:56.8px;height:24px;background:#2a86a0"></div></div>
<svg style="left:94.5px;top:806px" width="9" height="6" viewBox="0 0 9 6"><path d="M0.5 0.5h8l-4 5z" fill="#fff"/></svg>
<div class="t" style="left:108.90px;top:801.67px;font-size:12.2px;line-height:16px;font-weight:normal;color:#fff;letter-spacing:0.1px">Chat</div>
<svg style="left:147.5px;top:800.5px" width="14" height="17" viewBox="0 0 14 17"><path d="M1 1h8l4 4v11H1z" fill="none" stroke="#e8f0f2" stroke-width="1"/><path d="M9 1v4h4" fill="none" stroke="#e8f0f2" stroke-width="1"/><path d="M3.5 9h7M3.5 11.5h7M3.5 14h5" stroke="#e8f0f2" stroke-width="0.9"/></svg>
<svg style="left:170.5px;top:802px" width="15" height="13" viewBox="0 0 15 13"><path d="M1 7l4.3 4.5L14 1.5" fill="none" stroke="#fff" stroke-width="2"/></svg>
<svg style="left:266px;top:801px" width="17" height="17" viewBox="0 0 17 17"><path d="M8.5 1v15M1 8.5h15" stroke="#222" stroke-width="1.8"/></svg>
<svg style="left:290px;top:801.5px" width="15" height="16" viewBox="0 0 15 16"><circle cx="6.6" cy="6.8" r="5.6" fill="none" stroke="#222" stroke-width="1.3"/><path d="M10.6 11l3.6 4" stroke="#222" stroke-width="1.6"/><path d="M3.5 5.5a3.5 3.5 0 0 1 2.7-2.3" fill="none" stroke="#222" stroke-width="0.9"/></svg>
<svg style="left:313.5px;top:802px" width="10" height="15" viewBox="0 0 10 15"><path d="M8.2 5v6.6a3.6 3.6 0 0 1-7.2 0V3.6a2.6 2.6 0 0 1 5.2 0v7.6a1.1 1.1 0 0 1-2.2 0V5" fill="none" stroke="#333" stroke-width="1.15"/></svg>
<svg style="left:330px;top:800.6px" width="17" height="17" viewBox="0 0 14 14"><circle cx="7" cy="7" r="6.3" fill="none" stroke="#444" stroke-width="1.0"/><circle cx="4.9" cy="5.4" r="0.8" fill="#444"/><circle cx="9.1" cy="5.4" r="0.8" fill="#444"/><path d="M4.3 8.2q2.7 2.6 5.4 0" fill="none" stroke="#444" stroke-width="1.0"/></svg>
<svg style="left:354.5px;top:803px" width="14" height="12" viewBox="0 0 14 12"><path d="M5.8 4.6a2.7 2.7 0 1 0-4.4 2.1L1.6 10.6 5 6.8c.5-.6.8-1.3.8-2.2zM12.8 4.6a2.7 2.7 0 1 0-4.4 2.1L8.6 10.6 12 6.8c.5-.6.8-1.3.8-2.2z" fill="none" stroke="#333" stroke-width="1.2" stroke-linejoin="round"/></svg>
<div class="b" style="left:65.6px;top:829.0px;width:279px;height:36.4px;border:1px solid #c9cdd0;border-radius:4px;background:#fff"></div>
<div class="t" style="left:73.40px;top:839.64px;font-size:12.3px;line-height:16px;font-weight:normal;color:#444;letter-spacing:0.06px">Is there anything else I can help you do?</div>
<svg style="left:352px;top:839.6px" width="16" height="16" viewBox="0 0 15 15"><path d="M7.6 1C3.9 1 1 3.3 1 6.2c0 1.8 1.1 3.3 2.8 4.3L3 13.6l3.7-2.4c.3 0 .6.1.9.1 3.7 0 6.6-2.3 6.6-5.1S11.3 1 7.6 1z" fill="none" stroke="#555" stroke-width="1.05"/></svg>
<div class="b" style="left:65.6px;top:865.2px;width:279px;height:36.4px;border:1px solid #c9cdd0;border-radius:4px;background:#fff"></div>
<div class="t" style="left:73.40px;top:875.84px;font-size:12.3px;line-height:16px;font-weight:normal;color:#444;letter-spacing:0.06px">I didn't understand can you try again</div>
<svg style="left:352px;top:875.8000000000001px" width="16" height="16" viewBox="0 0 15 15"><path d="M7.6 1C3.9 1 1 3.3 1 6.2c0 1.8 1.1 3.3 2.8 4.3L3 13.6l3.7-2.4c.3 0 .6.1.9.1 3.7 0 6.6-2.3 6.6-5.1S11.3 1 7.6 1z" fill="none" stroke="#555" stroke-width="1.05"/></svg>
<div class="b" style="left:65.6px;top:901.4px;width:279px;height:36.4px;border:1px solid #c9cdd0;border-radius:4px;background:#fff"></div>
<div class="t" style="left:73.40px;top:912.04px;font-size:12.3px;line-height:16px;font-weight:normal;color:#444;letter-spacing:0.06px">I hope to help you again soon.</div>
<svg style="left:352px;top:912.0px" width="16" height="16" viewBox="0 0 15 15"><path d="M7.6 1C3.9 1 1 3.3 1 6.2c0 1.8 1.1 3.3 2.8 4.3L3 13.6l3.7-2.4c.3 0 .6.1.9.1 3.7 0 6.6-2.3 6.6-5.1S11.3 1 7.6 1z" fill="none" stroke="#555" stroke-width="1.05"/></svg>
<div class="t" style="left:398.90px;top:78.37px;font-size:14.8px;line-height:18px;font-weight:normal;color:#333;">Teams</div>
<div class="t" style="left:393.60px;top:105.98px;font-size:11.6px;line-height:16px;font-weight:bold;color:#2e2e2e;">Name</div>
<svg style="left:432.3px;top:109.2px" width="5" height="9.4" viewBox="0 0 5 9.4"><path d="M2.4 0.3v8.6M0.8 6.4l1.6 2.5 1.6-2.5" fill="none" stroke="#4a4a4a" stroke-width="0.95"/></svg>
<div class="t" style="right:893.50px;top:105.98px;font-size:11.6px;line-height:16px;font-weight:bold;color:#2e2e2e;">Avg ACW Time</div>
<div class="t" style="right:812.70px;top:105.98px;font-size:11.6px;line-height:16px;font-weight:bold;color:#2e2e2e;">Busy</div>
<div class="t" style="right:680.00px;top:105.98px;font-size:11.6px;line-height:16px;font-weight:bold;color:#2e2e2e;">Not Ready</div>
<div class="t" style="right:547.50px;top:105.98px;font-size:11.6px;line-height:16px;font-weight:bold;color:#2e2e2e;">Ready</div>
<div class="t" style="right:414.60px;top:105.98px;font-size:11.6px;line-height:16px;font-weight:bold;color:#2e2e2e;">Logged In</div>
<div class="t" style="right:283.00px;top:105.98px;font-size:11.6px;line-height:16px;font-weight:bold;color:#2e2e2e;">Occupancy</div>
<div class="t" style="right:175.60px;top:105.98px;font-size:11.6px;line-height:16px;font-weight:bold;color:#2e2e2e;">IN Handled</div>
<div class="t" style="right:18.80px;top:105.98px;font-size:11.6px;line-height:16px;font-weight:bold;color:#2e2e2e;">IN Avg Handle Time</div>
<div class="b" style="left:388px;top:125.1px;width:1134.6px;height:20.9px;background:#c6dde6"></div>
<div class="t" style="left:393.60px;top:127.74px;font-size:12px;line-height:16px;font-weight:normal;color:#3a3a3a;">All Teams</div>
<div class="t" style="left:393.60px;top:149.14px;font-size:12px;line-height:16px;font-weight:normal;color:#3a3a3a;">San Bruno</div>
<div class="t" style="right:893.50px;top:149.14px;font-size:12px;line-height:16px;font-weight:normal;color:#3a3a3a;">00:00</div>
<div class="t" style="right:812.70px;top:149.14px;font-size:12px;line-height:16px;font-weight:normal;color:#3a3a3a;">0</div>
<div class="t" style="right:680.00px;top:149.14px;font-size:12px;line-height:16px;font-weight:normal;color:#3a3a3a;">0</div>
<div class="t" style="right:547.50px;top:149.14px;font-size:12px;line-height:16px;font-weight:normal;color:#e8262b;">0</div>
<div class="t" style="right:414.60px;top:149.14px;font-size:12px;line-height:16px;font-weight:normal;color:#e8262b;">0</div>
<div class="t" style="right:283.00px;top:149.14px;font-size:12px;line-height:16px;font-weight:normal;color:#3a3a3a;">0</div>
<div class="t" style="right:175.60px;top:149.14px;font-size:12px;line-height:16px;font-weight:normal;color:#3a3a3a;">0</div>
<div class="t" style="right:18.80px;top:149.14px;font-size:12px;line-height:16px;font-weight:normal;color:#3a3a3a;">00:00</div>
<div class="t" style="left:393.60px;top:170.24px;font-size:12px;line-height:16px;font-weight:normal;color:#3a3a3a;">Customer Service</div>
<div class="t" style="right:893.50px;top:170.24px;font-size:12px;line-height:16px;font-weight:normal;color:#3a3a3a;">00:01</div>
<div class="t" style="right:812.70px;top:170.24px;font-size:12px;line-height:16px;font-weight:normal;color:#3a3a3a;">1</div>
<div class="t" style="right:680.00px;top:170.24px;font-size:12px;line-height:16px;font-weight:normal;color:#3a3a3a;">0</div>
<div class="t" style="right:547.50px;top:170.24px;font-size:12px;line-height:16px;font-weight:normal;color:#e8262b;">0</div>
<div class="t" style="right:414.60px;top:170.24px;font-size:12px;line-height:16px;font-weight:normal;color:#3a3a3a;">1</div>
<div class="t" style="right:283.00px;top:170.24px;font-size:12px;line-height:16px;font-weight:normal;color:#3a3a3a;">52</div>
<div class="t" style="right:175.60px;top:170.24px;font-size:12px;line-height:16px;font-weight:normal;color:#3a3a3a;">7</div>
<div class="t" style="right:18.80px;top:170.24px;font-size:12px;line-height:16px;font-weight:normal;color:#3a3a3a;">01:38</div>
<div class="b" style="left:388px;top:167.7px;width:1134.6px;height:1px;background:#e9e9e9"></div>
<div class="b" style="left:388px;top:188.5px;width:1134.6px;height:1px;background:#e9e9e9"></div>
<div class="b" style="left:376px;top:197.3px;width:1158px;height:1px;background:#dcdcdc"></div>
<div class="t" style="left:398.90px;top:219.70px;font-size:15.3px;line-height:18px;font-weight:normal;color:#333;">All Teams Services</div>
<div class="t" style="left:393.60px;top:247.68px;font-size:11.6px;line-height:16px;font-weight:bold;color:#2e2e2e;">Name</div>
<svg style="left:432.3px;top:250.9px" width="5" height="9.4" viewBox="0 0 5 9.4"><path d="M2.4 9v-8.6M0.8 2.9l1.6-2.5 1.6 2.5" fill="none" stroke="#4a4a4a" stroke-width="0.95"/></svg>
<div class="t" style="right:952.00px;top:247.68px;font-size:11.6px;line-height:16px;font-weight:bold;color:#2e2e2e;">IN Waiti...</div>
<div class="t" style="right:873.20px;top:247.68px;font-size:11.6px;line-height:16px;font-weight:bold;color:#2e2e2e;">IN Svc Lev...</div>
<div class="t" style="right:806.50px;top:247.68px;font-size:11.6px;line-height:16px;font-weight:bold;color:#2e2e2e;">CB Wait...</div>
<div class="t" style="right:744.70px;top:247.68px;font-size:11.6px;line-height:16px;font-weight:bold;color:#2e2e2e;">IN Max ...</div>
<div class="t" style="right:677.00px;top:247.68px;font-size:11.6px;line-height:16px;font-weight:bold;color:#2e2e2e;">IN In IVR</div>
<div class="t" style="right:608.60px;top:247.68px;font-size:11.6px;line-height:16px;font-weight:bold;color:#2e2e2e;">Ready</div>
<div class="t" style="right:546.10px;top:247.68px;font-size:11.6px;line-height:16px;font-weight:bold;color:#2e2e2e;">Occupa...</div>
<div class="t" style="right:475.00px;top:247.68px;font-size:11.6px;line-height:16px;font-weight:bold;color:#2e2e2e;">IN Avg T...</div>
<div class="t" style="right:402.80px;top:247.68px;font-size:11.6px;line-height:16px;font-weight:bold;color:#2e2e2e;">IN Breac...</div>
<div class="t" style="right:343.00px;top:247.68px;font-size:11.6px;line-height:16px;font-weight:bold;color:#2e2e2e;">IN Que...</div>
<div class="t" style="right:279.00px;top:247.68px;font-size:11.6px;line-height:16px;font-weight:bold;color:#2e2e2e;">IN Han...</div>
<div class="t" style="right:209.90px;top:247.68px;font-size:11.6px;line-height:16px;font-weight:bold;color:#2e2e2e;">IN Active</div>
<div class="t" style="right:133.40px;top:247.68px;font-size:11.6px;line-height:16px;font-weight:bold;color:#2e2e2e;">IN Queue ...</div>
<div class="t" style="right:55.40px;top:247.68px;font-size:11.6px;line-height:16px;font-weight:bold;color:#2e2e2e;">Logged In</div>
<div class="t" style="right:21.00px;top:247.68px;font-size:11.6px;line-height:16px;font-weight:bold;color:#2e2e2e;">Bu...</div>
<div class="b" style="left:388px;top:266px;width:1134.6px;height:1px;background:#e9e9e9"></div>
<div class="t" style="left:393.60px;top:270.14px;font-size:12px;line-height:16px;font-weight:normal;color:#3a3a3a;">BP Chat Service</div>
<div class="t" style="right:952.00px;top:270.14px;font-size:12px;line-height:16px;font-weight:normal;color:#3a3a3a;">0</div>
<div class="t" style="right:871.00px;top:270.14px;font-size:12px;line-height:16px;font-weight:normal;color:#3a3a3a;">100 (80/20)</div>
<div class="t" style="right:806.50px;top:270.14px;font-size:12px;line-height:16px;font-weight:normal;color:#3a3a3a;">0</div>

<div class="t" style="right:677.50px;top:270.14px;font-size:12px;line-height:16px;font-weight:normal;color:#3a3a3a;">0</div>
<div class="t" style="right:608.50px;top:270.14px;font-size:12px;line-height:16px;font-weight:normal;color:#e8262b;">0</div>
<div class="t" style="right:539.00px;top:270.14px;font-size:12px;line-height:16px;font-weight:normal;color:#3a3a3a;">52</div>
<div class="t" style="right:470.00px;top:270.14px;font-size:12px;line-height:16px;font-weight:normal;color:#3a3a3a;">01:38</div>
<div class="t" style="right:401.20px;top:270.14px;font-size:12px;line-height:16px;font-weight:normal;color:#3a3a3a;">0</div>
<div class="t" style="right:337.20px;top:270.14px;font-size:12px;line-height:16px;font-weight:normal;color:#3a3a3a;">6</div>
<div class="t" style="right:273.10px;top:270.14px;font-size:12px;line-height:16px;font-weight:normal;color:#3a3a3a;">6</div>
<div class="t" style="right:210.00px;top:270.14px;font-size:12px;line-height:16px;font-weight:normal;color:#3a3a3a;">1</div>
<div class="t" style="right:129.20px;top:270.14px;font-size:12px;line-height:16px;font-weight:normal;color:#3a3a3a;">0</div>
<div class="t" style="right:55.40px;top:270.14px;font-size:12px;line-height:16px;font-weight:normal;color:#3a3a3a;">1</div>
<div class="t" style="right:32.50px;top:270.14px;font-size:12px;line-height:16px;font-weight:normal;color:#3a3a3a;">1</div>
<div class="t" style="left:393.60px;top:291.29px;font-size:12px;line-height:16px;font-weight:normal;color:#3a3a3a;">ChatService2</div>
<div class="t" style="right:952.00px;top:291.29px;font-size:12px;line-height:16px;font-weight:normal;color:#3a3a3a;">0</div>
<div class="t" style="right:871.00px;top:291.29px;font-size:12px;line-height:16px;font-weight:normal;color:#3a3a3a;">(80/20)</div>
<div class="t" style="right:806.50px;top:291.29px;font-size:12px;line-height:16px;font-weight:normal;color:#3a3a3a;">0</div>

<div class="t" style="right:677.50px;top:291.29px;font-size:12px;line-height:16px;font-weight:normal;color:#3a3a3a;">0</div>
<div class="t" style="right:608.50px;top:291.29px;font-size:12px;line-height:16px;font-weight:normal;color:#e8262b;">0</div>
<div class="t" style="right:539.00px;top:291.29px;font-size:12px;line-height:16px;font-weight:normal;color:#3a3a3a;">52</div>

<div class="t" style="right:401.20px;top:291.29px;font-size:12px;line-height:16px;font-weight:normal;color:#3a3a3a;">0</div>
<div class="t" style="right:337.20px;top:291.29px;font-size:12px;line-height:16px;font-weight:normal;color:#3a3a3a;">0</div>
<div class="t" style="right:273.10px;top:291.29px;font-size:12px;line-height:16px;font-weight:normal;color:#3a3a3a;">0</div>
<div class="t" style="right:210.00px;top:291.29px;font-size:12px;line-height:16px;font-weight:normal;color:#3a3a3a;">0</div>
<div class="t" style="right:129.20px;top:291.29px;font-size:12px;line-height:16px;font-weight:normal;color:#3a3a3a;">0</div>
<div class="t" style="right:55.40px;top:291.29px;font-size:12px;line-height:16px;font-weight:normal;color:#3a3a3a;">1</div>
<div class="t" style="right:32.50px;top:291.29px;font-size:12px;line-height:16px;font-weight:normal;color:#3a3a3a;">1</div>
<div class="t" style="left:393.60px;top:312.44px;font-size:12px;line-height:16px;font-weight:normal;color:#3a3a3a;">Email2</div>
<div class="t" style="right:952.00px;top:312.44px;font-size:12px;line-height:16px;font-weight:normal;color:#3a3a3a;">13</div>
<div class="t" style="right:871.00px;top:312.44px;font-size:12px;line-height:16px;font-weight:normal;color:#3a3a3a;">(80/5d)</div>
<div class="t" style="right:806.50px;top:312.44px;font-size:12px;line-height:16px;font-weight:normal;color:#3a3a3a;">0</div>
<div class="t" style="right:741.40px;top:312.44px;font-size:12px;line-height:16px;font-weight:normal;color:#3a3a3a;">00:00</div>
<div class="t" style="right:677.50px;top:312.44px;font-size:12px;line-height:16px;font-weight:normal;color:#3a3a3a;">0</div>
<div class="t" style="right:608.50px;top:312.44px;font-size:12px;line-height:16px;font-weight:normal;color:#e8262b;">0</div>
<div class="t" style="right:539.00px;top:312.44px;font-size:12px;line-height:16px;font-weight:normal;color:#3a3a3a;">0</div>

<div class="t" style="right:401.20px;top:312.44px;font-size:12px;line-height:16px;font-weight:normal;color:#3a3a3a;">5</div>
<div class="t" style="right:337.20px;top:312.44px;font-size:12px;line-height:16px;font-weight:normal;color:#3a3a3a;">0</div>
<div class="t" style="right:273.10px;top:312.44px;font-size:12px;line-height:16px;font-weight:normal;color:#3a3a3a;">0</div>
<div class="t" style="right:210.00px;top:312.44px;font-size:12px;line-height:16px;font-weight:normal;color:#3a3a3a;">0</div>
<div class="t" style="right:129.20px;top:312.44px;font-size:12px;line-height:16px;font-weight:normal;color:#3a3a3a;">0</div>
<div class="t" style="right:55.40px;top:312.44px;font-size:12px;line-height:16px;font-weight:normal;color:#e8262b;">0</div>
<div class="t" style="right:32.50px;top:312.44px;font-size:12px;line-height:16px;font-weight:normal;color:#3a3a3a;">0</div>
<div class="t" style="left:393.60px;top:333.59px;font-size:12px;line-height:16px;font-weight:normal;color:#3a3a3a;">EmailService</div>
<div class="t" style="right:952.00px;top:333.59px;font-size:12px;line-height:16px;font-weight:normal;color:#3a3a3a;">66</div>
<div class="t" style="right:871.00px;top:333.59px;font-size:12px;line-height:16px;font-weight:normal;color:#3a3a3a;">(80/5d)</div>
<div class="t" style="right:806.50px;top:333.59px;font-size:12px;line-height:16px;font-weight:normal;color:#3a3a3a;">0</div>
<div class="t" style="right:741.40px;top:333.59px;font-size:12px;line-height:16px;font-weight:normal;color:#3a3a3a;">00:00</div>
<div class="t" style="right:677.50px;top:333.59px;font-size:12px;line-height:16px;font-weight:normal;color:#3a3a3a;">0</div>
<div class="t" style="right:608.50px;top:333.59px;font-size:12px;line-height:16px;font-weight:normal;color:#e8262b;">0</div>
<div class="t" style="right:539.00px;top:333.59px;font-size:12px;line-height:16px;font-weight:normal;color:#3a3a3a;">52</div>

<div class="t" style="right:401.20px;top:333.59px;font-size:12px;line-height:16px;font-weight:normal;color:#3a3a3a;">49</div>
<div class="t" style="right:337.20px;top:333.59px;font-size:12px;line-height:16px;font-weight:normal;color:#3a3a3a;">0</div>
<div class="t" style="right:273.10px;top:333.59px;font-size:12px;line-height:16px;font-weight:normal;color:#3a3a3a;">0</div>
<div class="t" style="right:210.00px;top:333.59px;font-size:12px;line-height:16px;font-weight:normal;color:#3a3a3a;">0</div>
<div class="t" style="right:129.20px;top:333.59px;font-size:12px;line-height:16px;font-weight:normal;color:#3a3a3a;">0</div>
<div class="t" style="right:55.40px;top:333.59px;font-size:12px;line-height:16px;font-weight:normal;color:#3a3a3a;">1</div>
<div class="t" style="right:32.50px;top:333.59px;font-size:12px;line-height:16px;font-weight:normal;color:#3a3a3a;">1</div>
<div class="b" style="left:388px;top:287.2px;width:1134.6px;height:1px;background:#e9e9e9"></div>
<div class="b" style="left:388px;top:308.4px;width:1134.6px;height:1px;background:#e9e9e9"></div>
<div class="b" style="left:388px;top:329.5px;width:1134.6px;height:1px;background:#e9e9e9"></div>
<div class="b" style="left:388px;top:351.5px;width:1134.6px;height:2px;background:#b9bcbe"></div>
<div class="t" style="right:952.00px;top:354.91px;font-size:11.8px;line-height:16px;font-weight:bold;color:#333;">80</div>
<div class="t" style="right:871.00px;top:354.91px;font-size:11.8px;line-height:16px;font-weight:bold;color:#333;">25</div>
<div class="t" style="right:806.50px;top:354.91px;font-size:11.8px;line-height:16px;font-weight:bold;color:#333;">0</div>
<div class="t" style="right:741.40px;top:354.91px;font-size:11.8px;line-height:16px;font-weight:bold;color:#333;">01:20</div>
<div class="t" style="right:677.50px;top:354.91px;font-size:11.8px;line-height:16px;font-weight:bold;color:#333;">0</div>
<div class="t" style="right:608.50px;top:354.91px;font-size:11.8px;line-height:16px;font-weight:bold;color:#333;">0</div>
<div class="t" style="right:539.00px;top:354.91px;font-size:11.8px;line-height:16px;font-weight:bold;color:#333;">54</div>
<div class="t" style="right:470.00px;top:354.91px;font-size:11.8px;line-height:16px;font-weight:bold;color:#333;">01:24</div>
<div class="t" style="right:401.00px;top:354.91px;font-size:11.8px;line-height:16px;font-weight:bold;color:#333;">54</div>
<div class="t" style="right:338.00px;top:354.91px;font-size:11.8px;line-height:16px;font-weight:bold;color:#333;">11</div>
<div class="t" style="right:274.00px;top:354.91px;font-size:11.8px;line-height:16px;font-weight:bold;color:#333;">7</div>
<div class="t" style="right:210.00px;top:354.91px;font-size:11.8px;line-height:16px;font-weight:bold;color:#333;">1</div>
<div class="t" style="right:130.00px;top:354.91px;font-size:11.8px;line-height:16px;font-weight:bold;color:#333;">0</div>
<div class="t" style="right:56.00px;top:354.91px;font-size:11.8px;line-height:16px;font-weight:bold;color:#333;">1</div>
<div class="t" style="right:18.60px;top:354.91px;font-size:11.8px;line-height:16px;font-weight:bold;color:#333;">1</div>
<div class="b" style="left:376px;top:374.5px;width:1158px;height:1px;background:#dcdcdc"></div>
<div class="t" style="left:398.50px;top:396.70px;font-size:15.3px;line-height:18px;font-weight:normal;color:#333;">All Teams Agents</div>
<div class="b" style="left:1412.6px;top:398.4px;width:14.4px;height:13.6px;border:1px solid #c4c4c4;background:#fff"></div>
<div class="t" style="left:1432.00px;top:396.81px;font-size:12.1px;line-height:16px;font-weight:normal;color:#3a3a3a;">logged-out users</div>
<div class="t" style="left:475.50px;top:424.58px;font-size:11.6px;line-height:16px;font-weight:bold;color:#2e2e2e;">Name</div>
<svg style="left:514.2px;top:427.8px" width="5" height="9.4" viewBox="0 0 5 9.4"><path d="M2.4 9v-8.6M0.8 2.9l1.6-2.5 1.6 2.5" fill="none" stroke="#4a4a4a" stroke-width="0.95"/></svg>
<div class="t" style="left:580.20px;top:424.58px;font-size:11.6px;line-height:16px;font-weight:bold;color:#2e2e2e;">Sen...</div>
<div class="t" style="right:811.20px;top:424.58px;font-size:11.6px;line-height:16px;font-weight:bold;color:#2e2e2e;">Time in State</div>
<div class="t" style="right:678.30px;top:424.58px;font-size:11.6px;line-height:16px;font-weight:bold;color:#2e2e2e;">Agent State</div>
<div class="t" style="left:869.00px;top:424.58px;font-size:11.6px;line-height:16px;font-weight:bold;color:#2e2e2e;">AC...</div>
<div class="t" style="right:544.40px;top:424.58px;font-size:11.6px;line-height:16px;font-weight:bold;color:#2e2e2e;">IN Handled</div>
<div class="t" style="right:494.30px;top:424.58px;font-size:11.6px;line-height:16px;font-weight:bold;color:#2e2e2e;">NPS</div>
<div class="t" style="right:444.00px;top:424.58px;font-size:11.6px;line-height:16px;font-weight:bold;color:#2e2e2e;">CSAT</div>
<div class="t" style="right:393.40px;top:424.58px;font-size:11.6px;line-height:16px;font-weight:bold;color:#2e2e2e;">FCR</div>
<div class="t" style="right:310.80px;top:424.58px;font-size:11.6px;line-height:16px;font-weight:bold;color:#2e2e2e;">Occupancy</div>
<div class="t" style="right:263.00px;top:424.58px;font-size:11.6px;line-height:16px;font-weight:bold;color:#2e2e2e;">Active</div>
<div class="t" style="left:1284.60px;top:424.58px;font-size:11.6px;line-height:16px;font-weight:bold;color:#2e2e2e;">Interact...</div>
<div class="t" style="right:120.60px;top:424.58px;font-size:11.6px;line-height:16px;font-weight:bold;color:#2e2e2e;">Service</div>
<div class="t" style="right:63.60px;top:424.58px;font-size:11.6px;line-height:16px;font-weight:bold;color:#2e2e2e;">Talk</div>
<div class="t" style="right:19.00px;top:424.58px;font-size:11.6px;line-height:16px;font-weight:bold;color:#2e2e2e;">Rec</div>
<div class="b" style="left:388px;top:442.3px;width:1134.6px;height:1px;background:#e9e9e9"></div>
<div class="b" style="left:393.2px;top:446.2px;width:16px;height:16px;border-radius:50%;background:#3188c4;border:1.5px solid #bcd9e8;box-shadow:0 0 0 0.6px #3188c4"></div>
<svg style="left:423.2px;top:446.5px" width="16" height="15" viewBox="0 0 16 15"><path d="M8 .8C4 .8.8 3.2.8 6.1c0 1.8 1.2 3.4 3 4.3L2.8 14l4.2-2.7c.3 0 .7.1 1 .1 4 0 7.2-2.4 7.2-5.3S12 .8 8 .8z" fill="#2a86a0"/></svg>
<div class="t" style="left:475.50px;top:446.27px;font-size:12.2px;line-height:16px;font-weight:normal;color:#3a3a3a;">Christy Borden</div>
<svg style="left:597.8px;top:447.6px" width="14" height="14" viewBox="0 0 14 14"><circle cx="7" cy="7" r="6.3" fill="none" stroke="#555" stroke-width="1.1"/><circle cx="4.9" cy="5.4" r="0.8" fill="#555"/><circle cx="9.1" cy="5.4" r="0.8" fill="#555"/><path d="M4.8 9.2h4.4" stroke="#555" stroke-width="1.1"/></svg>
<div class="t" style="right:810.50px;top:446.34px;font-size:12px;line-height:16px;font-weight:normal;color:#3a3a3a;">04:58</div>
<div class="t" style="right:678.50px;top:446.34px;font-size:12px;line-height:16px;font-weight:normal;color:#3a3a3a;">Busy</div>
<div class="t" style="left:872.00px;top:446.34px;font-size:12px;line-height:16px;font-weight:normal;color:#3a3a3a;">00:06</div>
<div class="t" style="right:544.40px;top:446.34px;font-size:12px;line-height:16px;font-weight:normal;color:#3a3a3a;">5</div>
<div class="t" style="right:494.30px;top:446.34px;font-size:12px;line-height:16px;font-weight:normal;color:#3a3a3a;">0</div>
<div class="t" style="right:444.00px;top:446.34px;font-size:12px;line-height:16px;font-weight:normal;color:#3a3a3a;">0.0</div>
<div class="t" style="right:393.40px;top:446.34px;font-size:12px;line-height:16px;font-weight:normal;color:#3a3a3a;">0</div>
<div class="t" style="right:310.80px;top:446.34px;font-size:12px;line-height:16px;font-weight:normal;color:#e8262b;">54</div>
<div class="t" style="right:263.00px;top:446.34px;font-size:12px;line-height:16px;font-weight:normal;color:#3a3a3a;">1</div>
<div class="t" style="left:1284.60px;top:446.34px;font-size:12px;line-height:16px;font-weight:normal;color:#3a3a3a;">Sarah H...</div>
<div class="t" style="left:1350.20px;top:446.34px;font-size:12px;line-height:16px;font-weight:normal;color:#3a3a3a;">BP Chat S...</div>
<div class="t" style="right:63.00px;top:446.34px;font-size:12px;line-height:16px;font-weight:normal;color:#3a3a3a;">04:56</div>
<div class="t" style="right:19.00px;top:446.34px;font-size:12px;line-height:16px;font-weight:normal;color:#3a3a3a;">no</div>
<div class="b" style="left:388px;top:464.0px;width:1134.6px;height:1px;background:#e9e9e9"></div>
<div class="b" style="left:388px;top:485.2px;width:1134.6px;height:1px;background:#e9e9e9"></div>
<div class="b" style="left:388px;top:506.4px;width:1134.6px;height:1px;background:#e9e9e9"></div>
<div class="b" style="left:388px;top:527.6px;width:1134.6px;height:1px;background:#e9e9e9"></div>
<div class="b" style="left:388px;top:548.8px;width:1134.6px;height:1px;background:#e9e9e9"></div>
<div class="b" style="left:388px;top:570.0px;width:1134.6px;height:1px;background:#e9e9e9"></div>
<div class="b" style="left:388px;top:591.2px;width:1134.6px;height:1px;background:#e9e9e9"></div>
<div class="b" style="left:388px;top:612.4px;width:1134.6px;height:1px;background:#e9e9e9"></div>
<div class="b" style="left:388px;top:633.6px;width:1134.6px;height:1px;background:#e9e9e9"></div>
<div class="b" style="left:388px;top:654.8px;width:1134.6px;height:1px;background:#e9e9e9"></div>
<div class="b" style="left:388px;top:676.0px;width:1134.6px;height:1px;background:#e9e9e9"></div>
<div class="b" style="left:388px;top:697.2px;width:1134.6px;height:1px;background:#e9e9e9"></div>
<div class="b" style="left:388px;top:718.4px;width:1134.6px;height:1px;background:#e9e9e9"></div>
<div class="b" style="left:388px;top:739.6px;width:1134.6px;height:1px;background:#e9e9e9"></div>
<div class="b" style="left:388px;top:760.8px;width:1134.6px;height:1px;background:#e9e9e9"></div>
<div class="b" style="left:388px;top:782.0px;width:1134.6px;height:1px;background:#e9e9e9"></div>
<div class="b" style="left:388px;top:803.2px;width:1134.6px;height:1px;background:#e9e9e9"></div>
<div class="b" style="left:388px;top:824.4px;width:1134.6px;height:1px;background:#e9e9e9"></div>
<div class="b" style="left:388px;top:845.6px;width:1134.6px;height:1px;background:#e9e9e9"></div>
<div class="b" style="left:388px;top:866.8px;width:1134.6px;height:1px;background:#e9e9e9"></div>
<div class="b" style="left:388px;top:888.0px;width:1134.6px;height:1px;background:#e9e9e9"></div>
<div class="b" style="left:388px;top:909.2px;width:1134.6px;height:1px;background:#e9e9e9"></div>
<div class="b" style="left:388px;top:930.4px;width:1134.6px;height:1px;background:#e9e9e9"></div>
<div class="b" style="left:949.4px;top:662.7px;width:365.6px;height:186px;border:1px solid #4a84a3;border-radius:3px;background:#f9f9f9;overflow:hidden"><div style="position:absolute;left:0;top:0;right:0;height:32.5px;background:#4a84a3"></div></div>
<div class="t" style="left:959.80px;top:673.69px;font-size:11px;line-height:16px;font-weight:normal;color:#fff;">Maintenance Renewal_MS</div>
<svg style="left:1280px;top:672.5px" width="16" height="15" viewBox="0 0 16 15"><path d="M12.6 3.2Q13.2 10.8 4 12.6" fill="none" stroke="#fff" stroke-width="2.3" stroke-linecap="round"/><path d="M10.6 1.6l3-1.1 1.6 2.6-2.6 2.1z" fill="#fff" stroke="#fff" stroke-width="1" stroke-linejoin="round"/><path d="M5.8 11.2l-1.9 2.7-2.9-1 .9-2.9z" fill="#fff" stroke="#fff" stroke-width="1" stroke-linejoin="round"/></svg>
<div class="t" style="left:962.30px;top:726.11px;font-size:14.4px;line-height:18px;font-weight:normal;color:#222;">Monalisa Diamond</div>
<div class="t" style="left:962.00px;top:787.82px;font-size:11.5px;line-height:16px;font-weight:normal;color:#222;">mobile (929) 459-9406</div>
<div class="b" style="left:959.8px;top:812px;width:69px;height:24.6px;border-radius:4px;background:#4a84a3"></div>
<div class="t" style="left:959.8px;top:812px;width:69px;height:24.6px;line-height:24.6px;text-align:center;font-size:12px;color:#fff">Accept</div>
<div class="b" style="left:1235.3px;top:812px;width:69px;height:24.6px;border-radius:4px;background:#fd8904"></div>
<div class="t" style="left:1235.3px;top:812px;width:69px;height:24.6px;line-height:24.6px;text-align:center;font-size:12px;color:#fff">Reject</div>
<div class="b" style="left:1535px;top:0px;width:1px;height:948px;background:#8d8f90"></div>
</body></html>
